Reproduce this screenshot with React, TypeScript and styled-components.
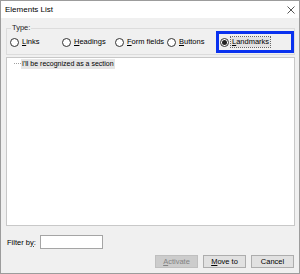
import React from 'react';
import styled, { createGlobalStyle } from 'styled-components';

const GlobalStyle = createGlobalStyle`
    html, body {
        margin: 0;
        padding: 0;
        background: #ffffff;
    }
    body {
        font-family: "Liberation Sans", Arial, sans-serif;
        font-size: 7.5px;
        color: #000;
    }
`

const StyledWindow = styled.div`
    width: 300px;
    height: 274px;
    box-sizing: border-box;
    border: 1px solid #9c9c9c;
    display: flex;
    flex-direction: column;
    background: #f0f0f0;
`

const StyledTitleBar = styled.div`
    height: 17px;
    flex-shrink: 0;
    background: #fff;
    display: flex;
    align-items: center;
    justify-content: space-between;
    padding: 0 4px 0 4px;
    font-size: 8px;
    svg {
        display: block;
    }
`

const StyledBody = styled.div`
    flex: 1;
    display: flex;
    flex-direction: column;
    padding: 5px 4px 5px 5px;
    min-height: 0;
`

const StyledGroup = styled.fieldset`
    margin: 0;
    padding: 0 0 3px 2px;
    border: 1px solid #dcdcdc;
    display: flex;
    legend {
        padding: 0 1px;
        margin-left: 2px;
        line-height: 10px;
        color: #222;
    }
`

const StyledRadioRow = styled.div`
    display: flex;
    align-items: center;
    height: 18px;
`

const StyledRadio = styled.label<{ $width: number; $focused?: boolean }>`
    width: ${p => p.$width}px;
    box-sizing: border-box;
    display: flex;
    align-items: center;
    gap: 2px;
    height: 16px;
    padding-left: 1px;
    ${p => p.$focused ? `
        outline: 3px solid #0a32ef;
    ` : ''}
    span.label {
        padding: 0 1px;
        line-height: 10px;
        ${p => p.$focused ? `
            background: #e2e2e2;
            outline: 1px dotted #666;
        ` : ''}
    }
    u {
        text-decoration: underline;
    }
`

const StyledCircle = styled.span<{ $checked?: boolean }>`
    width: 9px;
    height: 9px;
    border-radius: 50%;
    border: 1px solid #333;
    background: #fff;
    box-sizing: border-box;
    flex-shrink: 0;
    display: flex;
    align-items: center;
    justify-content: center;
    &::after {
        content: '';
        width: 5px;
        height: 5px;
        border-radius: 50%;
        background: ${p => p.$checked ? '#222' : 'transparent'};
    }
`

const StyledList = styled.div`
    flex: 1;
    margin-top: 2px;
    background: #fff;
    border: 1px solid #c8c8c8;
    padding: 0 0 0 7px;
`

const StyledTreeItem = styled.div`
    display: flex;
    align-items: center;
    height: 11px;
    font-size: 7px;
    &::before {
        content: '';
        width: 7px;
        border-top: 1px dotted #a0a0a0;
    }
    span {
        background: #e5e5e5;
        padding: 0 1px;
        line-height: 10px;
    }
`

const StyledFilterRow = styled.div`
    display: flex;
    align-items: center;
    gap: 4px;
    margin-top: 9px;
    padding-left: 1px;
`

const StyledInput = styled.div`
    width: 63px;
    height: 14px;
    border: 1px solid #a5a5a5;
    background: #fff;
    box-sizing: border-box;
`

const StyledButtons = styled.div`
    display: flex;
    justify-content: flex-end;
    gap: 5px;
    margin-top: 6px;
    padding-right: 1px;
`

const StyledButton = styled.div<{ $disabled?: boolean }>`
    width: 43px;
    height: 13px;
    box-sizing: border-box;
    border: 1px solid ${p => p.$disabled ? '#bfbfbf' : '#adadad'};
    background: ${p => p.$disabled ? '#cccccc' : '#e1e1e1'};
    color: ${p => p.$disabled ? '#838383' : '#000'};
    display: flex;
    align-items: center;
    justify-content: center;
`

const radios = [
    { key: 'L', rest: 'inks', width: 52 },
    { key: 'H', rest: 'eadings', width: 53 },
    { key: 'F', rest: 'orm fields', width: 52 },
    { key: 'B', rest: 'uttons', width: 53 },
]

const App = () => {
    return (
        <>
            <GlobalStyle />
            <StyledWindow>
                <StyledTitleBar>
                    <span>Elements List</span>
                    <svg width="8" height="8" viewBox="0 0 8 8">
                        <path d="M0.5 0.5 L7.5 7.5 M7.5 0.5 L0.5 7.5" stroke="#444" strokeWidth="0.9" />
                    </svg>
                </StyledTitleBar>
                <StyledBody>
                    <StyledGroup>
                        <legend>Type:</legend>
                        <StyledRadioRow>
                            {radios.map(r => (
                                <StyledRadio key={r.key} $width={r.width}>
                                    <StyledCircle />
                                    <span className="label"><u>{r.key}</u>{r.rest}</span>
                                </StyledRadio>
                            ))}
                            <StyledRadio $width={72} $focused>
                                <StyledCircle $checked />
                                <span className="label"><u>L</u>andmarks</span>
                            </StyledRadio>
                        </StyledRadioRow>
                    </StyledGroup>
                    <StyledList>
                        <StyledTreeItem><span>I'll be recognized as a section</span></StyledTreeItem>
                    </StyledList>
                    <StyledFilterRow>
                        <span>Filter b<u>y</u>:</span>
                        <StyledInput />
                    </StyledFilterRow>
                    <StyledButtons>
                        <StyledButton $disabled><span><u>A</u>ctivate</span></StyledButton>
                        <StyledButton><span><u>M</u>ove to</span></StyledButton>
                        <StyledButton>Cancel</StyledButton>
                    </StyledButtons>
                </StyledBody>
            </StyledWindow>
        </>
    )
}

export default App;
